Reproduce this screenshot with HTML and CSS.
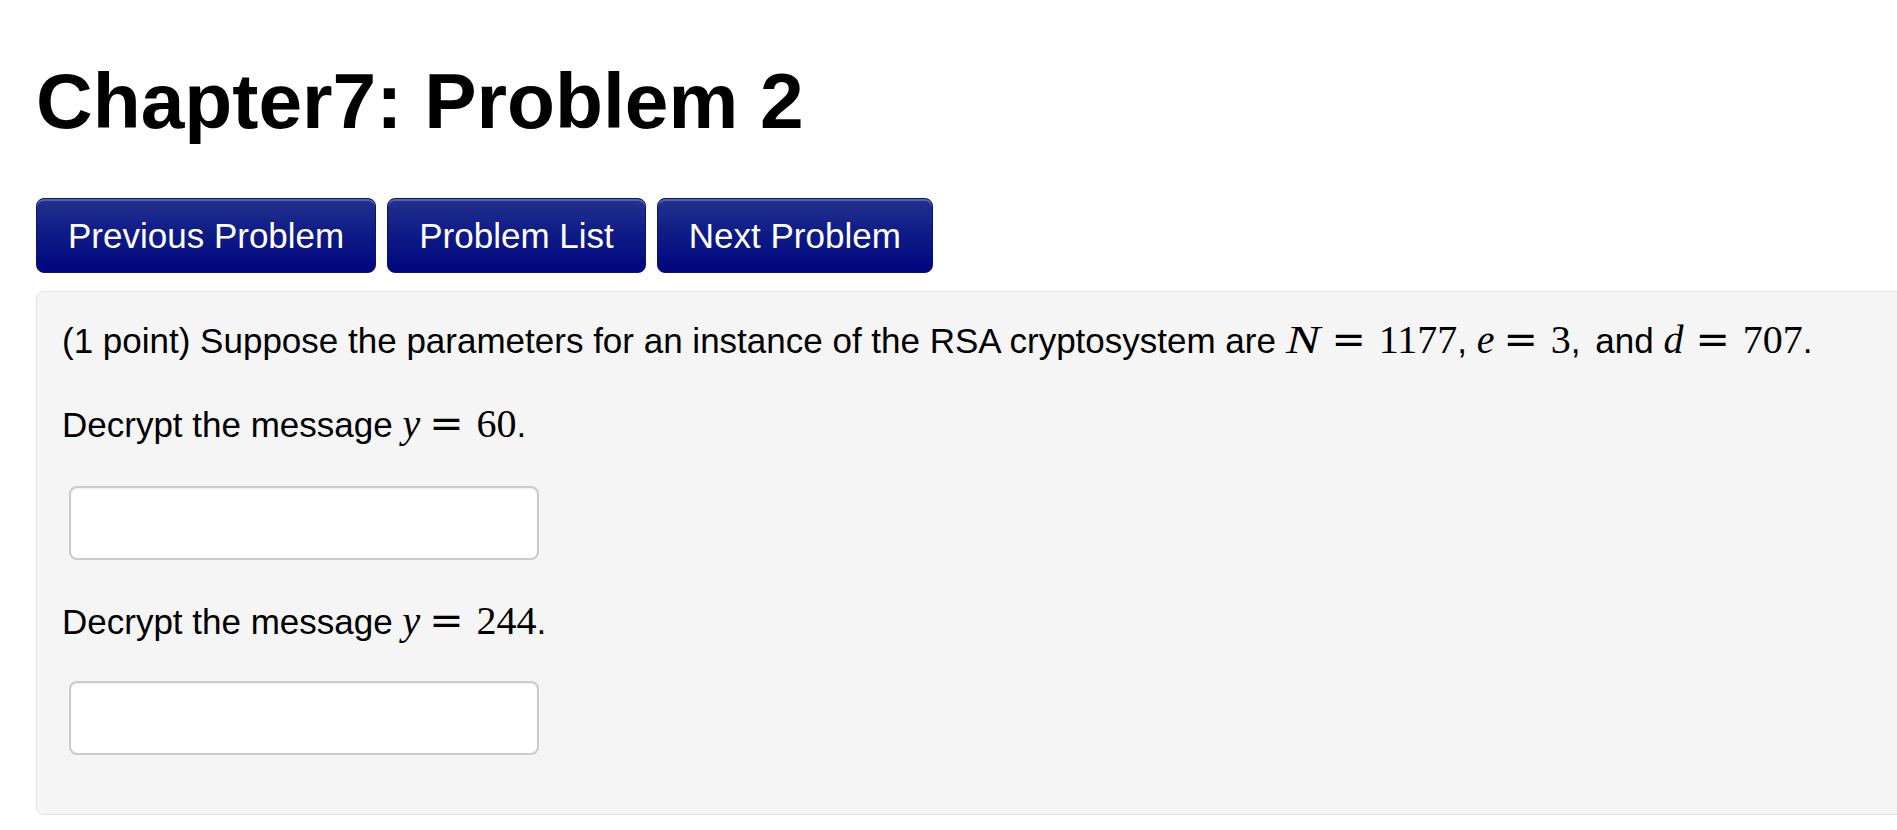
FILE: index.html
```html
<!DOCTYPE html>
<html lang="en">
<head>
<meta charset="utf-8">
<title>Chapter7: Problem 2</title>
<link rel="stylesheet" href="styles.css">
</head>
<body>
<div class="page">
  <h1 class="title">Chapter7: Problem 2</h1>
  <div class="nav">
    <button class="nav-btn" type="button">Previous Problem</button>
    <button class="nav-btn" type="button">Problem List</button>
    <button class="nav-btn" type="button">Next Problem</button>
  </div>
  <div class="problem">
    <p class="line first">(1 point) Suppose the parameters for an instance of the RSA cryptosystem are <span class="math"><span class="mi wide">N</span><span class="mo">=</span><span class="mn">1177</span></span>, <span class="math"><span class="mi">e</span><span class="mo">=</span><span class="mn">3</span></span>, <span class="and">and</span> <span class="math"><span class="mi dd">d</span><span class="mo">=</span><span class="mn">707</span></span>.</p>
    <p class="line">Decrypt the message <span class="math"><span class="mi">y</span><span class="mo">=</span><span class="mn">60</span></span>.</p>
    <input class="answer a1" type="text" aria-label="answer 1">
    <p class="line l3">Decrypt the message <span class="math"><span class="mi">y</span><span class="mo">=</span><span class="mn">244</span></span>.</p>
    <input class="answer a2" type="text" aria-label="answer 2">
  </div>
</div>
</body>
</html>
```
FILE: styles.css
```css
html, body {
  margin: 0;
  padding: 0;
  background: #ffffff;
  overflow: hidden;
}
.page {
  padding: 61px 0 0 36px;
  font-family: "Liberation Sans", Arial, sans-serif;
  color: #000;
}
.title {
  margin: 0;
  font-size: 78.5px;
  line-height: 80px;
  font-weight: bold;
}
.nav {
  display: flex;
  gap: 11px;
  margin-top: 57px;
}
.nav-btn {
  height: 75px;
  padding: 0 31px;
  border: 1px solid #0b1466;
  border-radius: 8px;
  background: linear-gradient(#23318f 0%, #101c86 45%, #00067f 100%);
  box-shadow: inset 0 2px 0 rgba(120, 140, 210, 0.55);
  color: #fff;
  font-family: "Liberation Sans", Arial, sans-serif;
  font-size: 35px;
  line-height: 1;
}
.problem {
  margin-top: 18px;
  margin-right: -20px;
  padding: 27px 0 59px 25px;
  background: #f5f5f5;
  border: 1px solid #e2e2e2;
  border-radius: 8px;
  display: flex;
  flex-direction: column;
  align-items: flex-start;
}
.line {
  margin: 40px 0 0 0;
  font-size: 35px;
  line-height: 44px;
}
.line.first {
  margin-top: 0;
}
.line.l3 {
  margin-top: 40px;
}
.and {
  padding-left: 5px;
}
.math {
  font-family: "Liberation Serif", "Times New Roman", serif;
  font-size: 40px;
  line-height: 0;
}
.mi {
  font-style: italic;
}
.mi.wide {
  display: inline-block;
  transform: scaleX(1.28);
  transform-origin: left center;
  margin-right: 10px;
}
.mi.dd {
  padding-right: 3px;
}
.mo {
  font-family: "DejaVu Serif", serif;
  font-size: 41px;
  padding: 0 13px 0 9px;
}
.mn {
  font-size: 40px;
}
.answer {
  box-sizing: border-box;
  width: 470px;
  height: 74px;
  margin: 39px 0 0 7px;
  border: 2px solid #cbcbcb;
  border-radius: 8px;
  background: #fff;
  box-shadow: inset 0 1px 2px rgba(0, 0, 0, 0.08);
  font-size: 28px;
}
.answer.a2 {
  margin-top: 37px;
}
```
